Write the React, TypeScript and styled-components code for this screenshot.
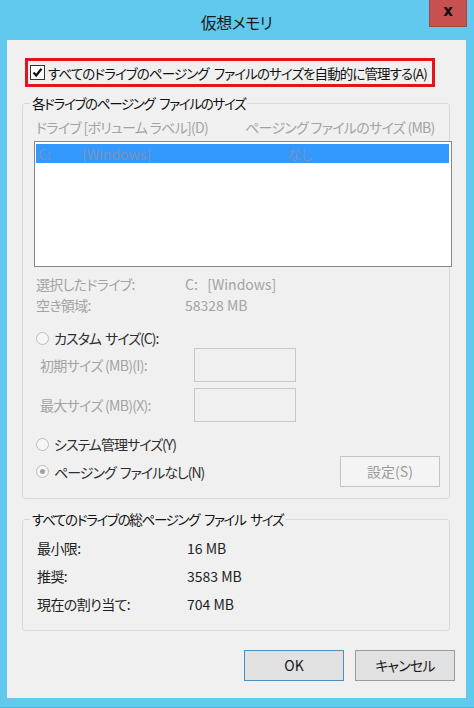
import React from 'react';
import styled, { createGlobalStyle } from 'styled-components';

const GlobalStyle = createGlobalStyle`
    html, body {
        margin: 0;
        padding: 0;
        background: #62c9ee;
    }
    body {
        font-family: "Noto Sans CJK JP", "Liberation Sans", sans-serif;
        font-feature-settings: "palt";
    }
`;

const CheckMark: React.FC = () => (
    <svg width="11" height="11" viewBox="0 0 11 11">
        <path d="M1.5 5.5 L4.2 8.5 L9.5 1.8" fill="none" stroke="#111" strokeWidth="2.2" />
    </svg>
);

interface IRadioProps {
    label: string;
    checked?: boolean;
}

const Radio: React.FC<IRadioProps> = ({ label, checked }: IRadioProps) => (
    <RadioRow>
        <RadioCircle>{checked && <RadioDot />}</RadioCircle>
        <RadioLabel>{label}</RadioLabel>
    </RadioRow>
);

export default function App() {
    return (
        <>
            <GlobalStyle />
            <Window>
                <TitleBar>
                    <span />
                    <Title>仮想メモリ</Title>
                    <CloseButton>x</CloseButton>
                </TitleBar>
                <Client>
                    <Highlight>
                        <CheckBox><CheckMark /></CheckBox>
                        <MainLabel>すべてのドライブのページング ファイルのサイズを自動的に管理する(A)</MainLabel>
                    </Highlight>

                    <Group>
                        <Legend>各ドライブのページング ファイルのサイズ</Legend>
                        <GroupBody $padTop={5} $padBottom={11}>
                            <ColumnHeads>
                                <DimText $tight>ドライブ [ボリューム ラベル](D)</DimText>
                                <DimText $tight>ページング ファイルのサイズ (MB)</DimText>
                            </ColumnHeads>
                            <ListBox>
                                <ListRow>
                                    <ListCell $width={44}>C:</ListCell>
                                    <ListCell $width={205}>[Windows]</ListCell>
                                    <ListCell>なし</ListCell>
                                </ListRow>
                            </ListBox>
                            <InfoGrid>
                                <DimText $tight>選択したドライブ:</DimText>
                                <DimText>C:&nbsp;&nbsp; [Windows]</DimText>
                                <DimText $tight>空き領域:</DimText>
                                <DimText>58328 MB</DimText>
                            </InfoGrid>
                            <Spacer $h={14} />
                            <Radio label="カスタム サイズ(C):" />
                            <SizeGrid>
                                <DimText $tight>初期サイズ (MB)(I):</DimText>
                                <SizeInput />
                                <DimText $tight>最大サイズ (MB)(X):</DimText>
                                <SizeInput />
                            </SizeGrid>
                            <Spacer $h={13} />
                            <Radio label="システム管理サイズ(Y)" />
                            <Spacer $h={3} />
                            <BottomRow>
                                <Radio label="ページング ファイルなし(N)" checked />
                                <SetButton>設定(S)</SetButton>
                            </BottomRow>
                        </GroupBody>
                    </Group>

                    <Group $top={10}>
                        <Legend>すべてのドライブの総ページング ファイル サイズ</Legend>
                        <GroupBody $padTop={5} $padBottom={12}>
                            <TotalGrid>
                                <DarkText $tight>最小限:</DarkText>
                                <DarkText>16 MB</DarkText>
                                <DarkText $tight>推奨:</DarkText>
                                <DarkText>3583 MB</DarkText>
                                <DarkText $tight>現在の割り当て:</DarkText>
                                <DarkText>704 MB</DarkText>
                            </TotalGrid>
                        </GroupBody>
                    </Group>

                    <ButtonBar>
                        <DialogButton $primary>OK</DialogButton>
                        <DialogButton $tight>キャンセル</DialogButton>
                    </ButtonBar>
                </Client>
            </Window>
        </>
    );
}

const Window = styled.div`
    width: 474px;
    height: 708px;
    box-sizing: border-box;
    background: #62c9ee;
    padding: 0 8px 9px 7px;
    display: flex;
    flex-direction: column;
    border-bottom: 1px solid #49b6de;
`;

const TitleBar = styled.div`
    height: 40px;
    display: grid;
    grid-template-columns: 1fr auto 1fr;
    align-items: start;
`;

const Title = styled.div`
    font-size: 16px;
    line-height: 22px;
    margin-top: 11px;
    letter-spacing: -0.6px;
    color: #1a1a1a;
`;

const CloseButton = styled.div`
    justify-self: end;
    margin-right: -1px;
    width: 38px;
    height: 27px;
    box-sizing: border-box;
    background: #c75050;
    border: 1px solid #a84343;
    border-top: none;
    color: #111;
    font-family: "DejaVu Sans", sans-serif;
    font-weight: bold;
    font-size: 15px;
    line-height: 22px;
    text-align: center;
`;

const Client = styled.div`
    flex: 1;
    background: #f0f0f0;
    padding: 18px 11px 0 15px;
    display: flex;
    flex-direction: column;
`;

const Highlight = styled.div`
    margin-left: 3px;
    width: 410px;
    height: 29px;
    box-sizing: border-box;
    border: 3px solid #e3141c;
    display: flex;
    align-items: center;
    padding-left: 2px;
    gap: 3px;
`;

const CheckBox = styled.div`
    width: 15px;
    height: 15px;
    box-sizing: border-box;
    border: 1px solid #333;
    background: #fff;
    display: flex;
    align-items: center;
    justify-content: center;
`;

const MainLabel = styled.span`
    font-size: 13.5px;
    line-height: 18px;
    letter-spacing: -0.9px;
    word-spacing: 3px;
    color: #111;
    white-space: nowrap;
`;

const Group = styled.fieldset<{ $top?: number }>`
    margin: ${p => p.$top ?? 6}px 0 0 0;
    width: 428px;
    box-sizing: border-box;
    padding: 0;
    border: 1px solid #dadada;
    border-radius: 3px;
    min-width: 0;
`;

const Legend = styled.legend`
    margin-left: 7px;
    padding: 0 2px;
    font-size: 13.5px;
    line-height: 20px;
    letter-spacing: -1.3px;
    word-spacing: 3px;
    color: #111;
    white-space: nowrap;
`;

const GroupBody = styled.div<{ $padTop: number; $padBottom: number }>`
    padding: ${p => p.$padTop}px 9px ${p => p.$padBottom}px 13px;
    display: flex;
    flex-direction: column;
`;

const DimText = styled.span<{ $tight?: boolean }>`
    font-size: 14px;
    line-height: 18px;
    letter-spacing: ${p => (p.$tight ? '-0.7px' : '0')};
    color: #a3a3a3;
    white-space: nowrap;
`;

const DarkText = styled.span<{ $tight?: boolean }>`
    font-size: 14px;
    line-height: 18px;
    letter-spacing: ${p => (p.$tight ? '-0.6px' : '0')};
    color: #1e1e1e;
    white-space: nowrap;
`;

const ColumnHeads = styled.div`
    display: grid;
    grid-template-columns: 209px 1fr;
    height: 18px;
`;

const ListBox = styled.div`
    margin: 5px -12px 0 -2px;
    height: 126px;
    box-sizing: border-box;
    border: 1px solid #828790;
    background: #fff;
    padding: 2px 2px 0 1px;
`;

const ListRow = styled.div`
    height: 19px;
    background: #3399ff;
    display: flex;
    align-items: center;
    padding-left: 2px;
`;

const ListCell = styled.span<{ $width?: number }>`
    width: ${p => (p.$width ? `${p.$width}px` : 'auto')};
    font-size: 14px;
    line-height: 18px;
    color: #7a93b5;
    white-space: nowrap;
`;

const InfoGrid = styled.div`
    margin-top: 6px;
    display: grid;
    grid-template-columns: 149px 1fr;
    grid-auto-rows: 21px;
    align-items: center;
`;

const Spacer = styled.div<{ $h: number }>`
    height: ${p => p.$h}px;
    flex-shrink: 0;
`;

const RadioRow = styled.div`
    display: flex;
    align-items: center;
    gap: 5px;
    height: 18px;
`;

const RadioCircle = styled.span`
    width: 13px;
    height: 13px;
    box-sizing: border-box;
    border: 1px solid #bcbcbc;
    border-radius: 50%;
    background: #f6f6f6;
    display: flex;
    align-items: center;
    justify-content: center;
`;

const RadioDot = styled.span`
    width: 5px;
    height: 5px;
    border-radius: 50%;
    background: #a0a0a0;
`;

const RadioLabel = styled.span`
    font-size: 14px;
    line-height: 18px;
    letter-spacing: -1px;
    word-spacing: 2px;
    color: #2e2e2e;
    white-space: nowrap;
`;

const SizeGrid = styled.div`
    margin-top: 1px;
    padding-left: 4px;
    display: grid;
    grid-template-columns: 154px 102px;
    grid-auto-rows: 34px;
    row-gap: 6px;
    align-items: center;
`;

const SizeInput = styled.div`
    height: 34px;
    box-sizing: border-box;
    border: 1px solid #c8c8c8;
    background: #f0f0f0;
`;

const BottomRow = styled.div`
    display: flex;
    align-items: center;
    justify-content: space-between;
    height: 31px;
`;

const SetButton = styled.div`
    width: 100px;
    height: 31px;
    box-sizing: border-box;
    border: 1px solid #c4c4c4;
    background: #f4f4f4;
    font-size: 14px;
    line-height: 29px;
    text-align: center;
    color: #9a9a9a;
`;

const TotalGrid = styled.div`
    padding-left: 1px;
    display: grid;
    grid-template-columns: 150px 1fr;
    grid-auto-rows: 28px;
    align-items: center;
`;

const ButtonBar = styled.div`
    margin-top: 19px;
    display: flex;
    justify-content: flex-end;
    gap: 11px;
`;

const DialogButton = styled.div<{ $primary?: boolean; $tight?: boolean }>`
    width: 100px;
    height: 31px;
    box-sizing: border-box;
    border: 1px solid ${p => (p.$primary ? '#4a8fc4' : '#9a9a9a')};
    background: #e1e1e1;
    font-size: 14px;
    line-height: 29px;
    letter-spacing: ${p => (p.$tight ? '-0.8px' : '0')};
    text-align: center;
    color: #1a1a1a;
`;
